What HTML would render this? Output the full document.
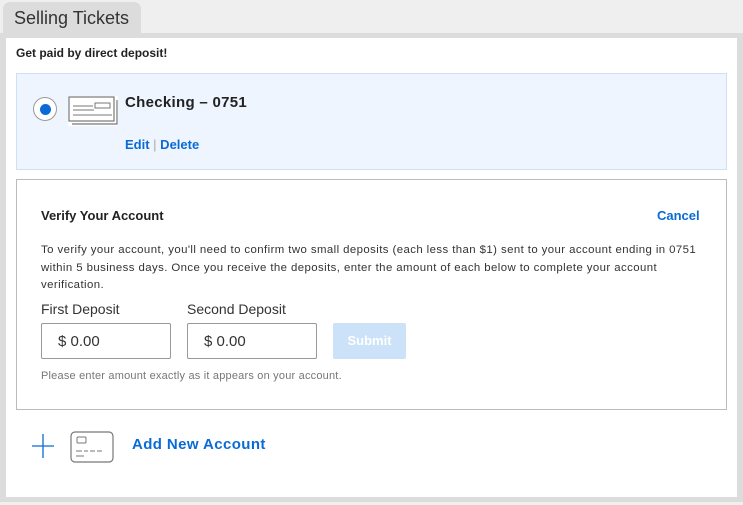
<!DOCTYPE html>
<html><head><style>
body{margin:0;width:743px;height:505px;background:#efefef;font-family:"Liberation Sans",sans-serif;position:relative;overflow:hidden}
.a{position:absolute}
.tab{left:3px;top:2px;width:138px;height:32px;background:#dcdcdc;border-radius:7px 7px 0 0;font-size:18px;color:#333;line-height:32px;padding-left:11px;box-sizing:border-box}
.panel{left:0;top:33px;width:743px;height:469px;background:#dcdcdc}
.inner{left:6px;top:38px;width:731px;height:459px;background:#fff}
.blue{color:#0a6bd6;font-weight:bold}
.box{border:1px solid #999;border-radius:2px;background:#fff;font-size:15px;color:#333;line-height:36px;padding-left:16px;box-sizing:border-box}
</style></head><body>
<div class="a tab">Selling Tickets</div>
<div class="a panel"></div>
<div class="a inner"></div>
<div class="a" style="left:16px;top:46px;font-size:12px;font-weight:bold;color:#222">Get paid by direct deposit!</div>
<div class="a" style="left:16px;top:73px;width:711px;height:97px;background:#eef5fe;border:1px solid #cfe0f2;box-sizing:border-box"></div>
<div class="a" style="left:33px;top:97px;width:24px;height:24px;border:1px solid #999;border-radius:50%;background:#fff;box-sizing:border-box"></div>
<div class="a" style="left:40px;top:104px;width:11px;height:11px;border-radius:50%;background:#0a6bd6"></div>
<svg class="a" style="left:68px;top:96px" width="50" height="30" viewBox="0 0 50 30"><rect x="0" y="0" width="50" height="30" fill="#fff"/><rect x="1" y="1" width="45" height="24" fill="none" stroke="#777" stroke-width="1.2"/><path d="M4 28H49V4" fill="none" stroke="#777" stroke-width="1.2"/><path d="M5 10H25M5 14H26M5 19H44" stroke="#777"/><rect x="27" y="7" width="15" height="5" fill="none" stroke="#777"/></svg>
<div class="a" style="left:125px;top:94px;font-size:15px;font-weight:bold;color:#222;letter-spacing:.3px">Checking – 0751</div>
<div class="a blue" style="left:125px;top:137px;font-size:13px">Edit <span style="color:#aaa;font-weight:normal">|</span> Delete</div>
<div class="a" style="left:16px;top:179px;width:711px;height:231px;border:1px solid #bbb;box-sizing:border-box"></div>
<div class="a" style="left:41px;top:208px;font-size:13px;font-weight:bold;color:#222">Verify Your Account</div>
<div class="a blue" style="left:657px;top:208px;font-size:13px">Cancel</div>
<div class="a" style="left:41px;top:242px;width:680px;font-size:11.4px;line-height:17.5px;color:#333;white-space:nowrap;letter-spacing:.42px">To verify your account, you'll need to confirm two small deposits (each less than $1) sent to your account ending in 0751<br>within 5 business days. Once you receive the deposits, enter the amount of each below to complete your account<br>verification.</div>
<div class="a" style="left:41px;top:301px;font-size:14px;color:#333">First Deposit</div>
<div class="a" style="left:187px;top:301px;font-size:14px;color:#333">Second Deposit</div>
<div class="a box" style="left:41px;top:323px;width:130px;height:36px">$ 0.00</div>
<div class="a box" style="left:187px;top:323px;width:130px;height:36px">$ 0.00</div>
<div class="a" style="left:333px;top:323px;width:73px;height:36px;background:#cce2f8;color:#fff;font-weight:bold;font-size:13px;line-height:36px;text-align:center;border-radius:2px">Submit</div>
<div class="a" style="left:41px;top:370px;font-size:11px;color:#777;letter-spacing:.2px">Please enter amount exactly as it appears on your account.</div>
<svg class="a" style="left:31px;top:433px" width="24" height="26"><path d="M12 1V25M1 13H23" stroke="#0a6bd6" stroke-width="1.3"/></svg>
<svg class="a" style="left:70px;top:431px" width="44" height="32"><rect x="1" y="1" width="42" height="30" rx="4" fill="#fff" stroke="#777" stroke-width="1.2"/><rect x="7" y="6" width="9" height="6" rx="1" fill="none" stroke="#777"/><path d="M6 20H12M14 20H18M20 20H25M27 20H32M6 25H14" stroke="#777"/></svg>
<div class="a blue" style="left:132px;top:436px;font-size:15px;font-weight:bold;letter-spacing:.4px">Add New Account</div>
</body></html>
